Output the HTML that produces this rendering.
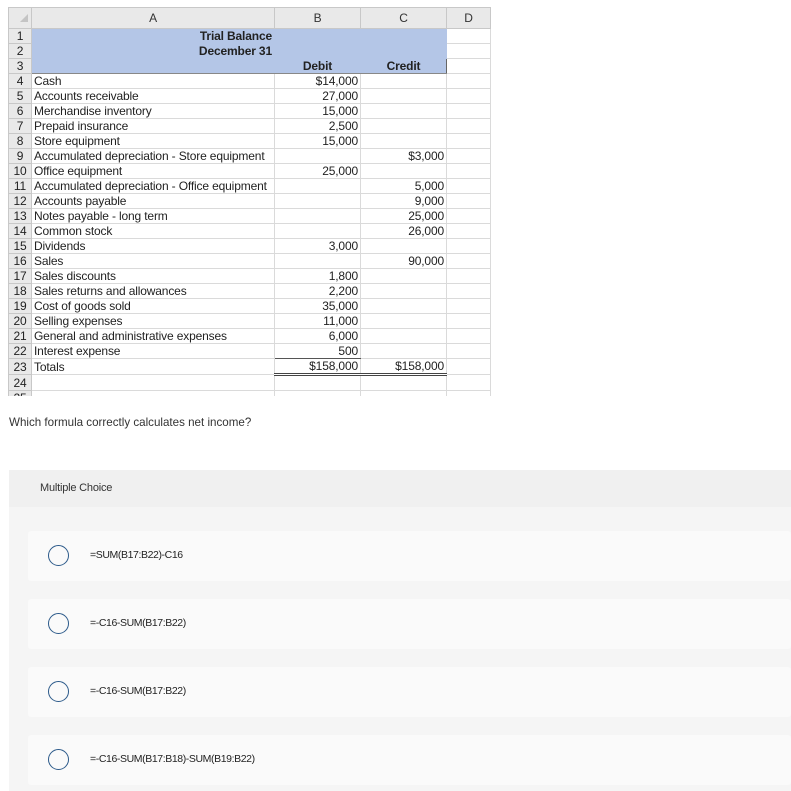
<!DOCTYPE html>
<html><head><meta charset="utf-8"><style>
body{margin:0;background:#fff;width:791px;height:791px;overflow:hidden;position:relative;font-family:"Liberation Sans",Arial,sans-serif;}
.wrap{position:absolute;left:8px;top:7px;height:389px;overflow:hidden;}
.sh{border-collapse:collapse;table-layout:fixed;font-size:12px;color:#222;letter-spacing:-0.15px;}
.sh td{height:14px;padding:0 2px;border:1px solid #dadada;white-space:nowrap;overflow:hidden;line-height:14px;}
.sh tr.h td{height:20px;background:#e9e9e9;text-align:center;border-color:#c8c8c8;color:#333;}
.sh td.rn{background:#e9e9e9;text-align:center;border-color:#c8c8c8;padding:0;font-size:12px;}
.b{background:#b4c6e7;border-color:#b4c6e7!important;}
.r{text-align:right;}
.bold{font-weight:bold;}
.q{position:absolute;left:9px;top:416px;font-size:11.6px;color:#333;}
.panel{position:absolute;left:9px;top:470px;width:782px;height:321px;background:#f5f5f5;}
.ph{height:37px;background:#f0f0f0;font-size:11px;color:#333;line-height:37px;padding-left:31px;letter-spacing:-0.2px;}
.card{position:absolute;left:19px;width:763px;height:50px;background:#fafafa;border-radius:3px;}
.card .c{position:absolute;left:20px;top:14px;width:19px;height:19px;border:1.5px solid #2c5a8a;border-radius:50%;}
.card .t{position:absolute;left:62px;top:0;line-height:48px;font-size:10.5px;color:#222;letter-spacing:-0.4px;}
</style></head><body>
<div class="wrap">
<table class="sh">
<colgroup><col style="width:23px"><col style="width:243px"><col style="width:86px"><col style="width:86px"><col style="width:44px"></colgroup>
<tr class="h"><td style="background:#e9e9e9"><span style="display:inline-block;width:0;height:0;border-left:8px solid transparent;border-bottom:8px solid #c4c4c4;margin-left:8px"></span></td><td>A</td><td>B</td><td>C</td><td>D</td></tr>
<tr><td class="rn">1</td><td class="b r bold">Trial Balance</td><td class="b"></td><td class="b"></td><td></td></tr>
<tr><td class="rn">2</td><td class="b r bold">December 31</td><td class="b"></td><td class="b"></td><td></td></tr>
<tr><td class="rn">3</td><td class="b" style="border-bottom:1px solid #888!important"></td><td class="b bold" style="text-align:center;border-bottom:1px solid #888!important">Debit</td><td class="b bold" style="text-align:center;border-bottom:1px solid #888!important;border-right:1px solid #666!important">Credit</td><td></td></tr>
<tr><td class="rn">4</td><td>Cash</td><td class="r">$14,000</td><td></td><td></td></tr>
<tr><td class="rn">5</td><td>Accounts receivable</td><td class="r">27,000</td><td></td><td></td></tr>
<tr><td class="rn">6</td><td>Merchandise inventory</td><td class="r">15,000</td><td></td><td></td></tr>
<tr><td class="rn">7</td><td>Prepaid insurance</td><td class="r">2,500</td><td></td><td></td></tr>
<tr><td class="rn">8</td><td>Store equipment</td><td class="r">15,000</td><td></td><td></td></tr>
<tr><td class="rn">9</td><td>Accumulated depreciation - Store equipment</td><td></td><td class="r">$3,000</td><td></td></tr>
<tr><td class="rn">10</td><td>Office equipment</td><td class="r">25,000</td><td></td><td></td></tr>
<tr><td class="rn">11</td><td>Accumulated depreciation - Office equipment</td><td></td><td class="r">5,000</td><td></td></tr>
<tr><td class="rn">12</td><td>Accounts payable</td><td></td><td class="r">9,000</td><td></td></tr>
<tr><td class="rn">13</td><td>Notes payable - long term</td><td></td><td class="r">25,000</td><td></td></tr>
<tr><td class="rn">14</td><td>Common stock</td><td></td><td class="r">26,000</td><td></td></tr>
<tr><td class="rn">15</td><td>Dividends</td><td class="r">3,000</td><td></td><td></td></tr>
<tr><td class="rn">16</td><td>Sales</td><td></td><td class="r">90,000</td><td></td></tr>
<tr><td class="rn">17</td><td>Sales discounts</td><td class="r">1,800</td><td></td><td></td></tr>
<tr><td class="rn">18</td><td>Sales returns and allowances</td><td class="r">2,200</td><td></td><td></td></tr>
<tr><td class="rn">19</td><td>Cost of goods sold</td><td class="r">35,000</td><td></td><td></td></tr>
<tr><td class="rn">20</td><td>Selling expenses</td><td class="r">11,000</td><td></td><td></td></tr>
<tr><td class="rn">21</td><td>General and administrative expenses</td><td class="r">6,000</td><td></td><td></td></tr>
<tr><td class="rn">22</td><td>Interest expense</td><td class="r" style="border-bottom:1px solid #555">500</td><td></td><td></td></tr>
<tr><td class="rn">23</td><td>Totals</td><td class="r" style="border-bottom:3px double #444">$158,000</td><td class="r" style="border-bottom:3px double #444">$158,000</td><td></td></tr>
<tr><td class="rn">24</td><td></td><td></td><td></td><td></td></tr>
<tr><td class="rn">25</td><td></td><td></td><td></td><td></td></tr>
</table>
</div>
<div class="q">Which formula correctly calculates net income?</div>
<div class="panel">
<div class="ph">Multiple Choice</div>
<div class="card" style="top:61px"><div class="c"></div><div class="t">=SUM(B17:B22)-C16</div></div>
<div class="card" style="top:129px"><div class="c"></div><div class="t">=-C16-SUM(B17:B22)</div></div>
<div class="card" style="top:197px"><div class="c"></div><div class="t">=-C16-SUM(B17:B22)</div></div>
<div class="card" style="top:265px"><div class="c"></div><div class="t">=-C16-SUM(B17:B18)-SUM(B19:B22)</div></div>
</div>
</body></html>
